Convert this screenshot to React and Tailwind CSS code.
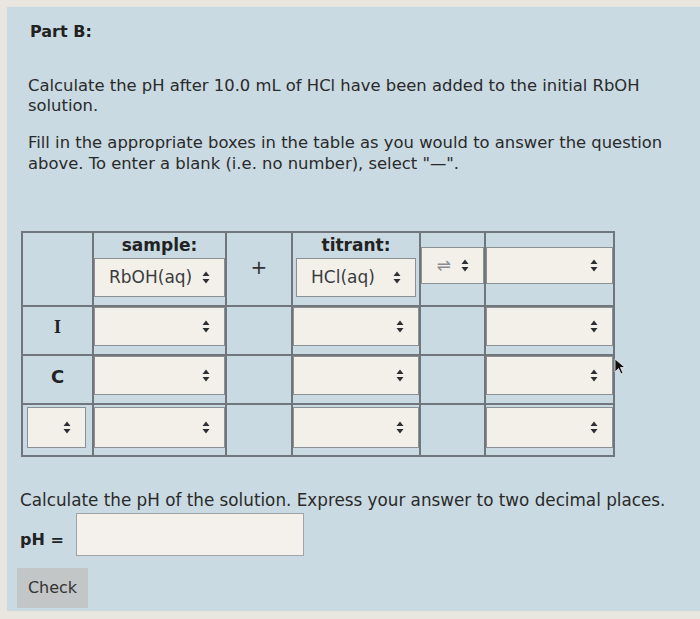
import React from 'react'

const font = { fontFamily: '"DejaVu Sans", Verdana, sans-serif' }

const Arrows = () => (
    <svg width="8" height="13" viewBox="0 0 8 13">
        <path d="M4 0.5L7.5 5H0.5Z M0.5 8H7.5L4 12.5Z" fill="#2d3033" />
    </svg>
)

const Select = ({ children, className = '' }) => (
    <div className={`flex items-center justify-between border border-[#8b9095] bg-[#f3f0ea] pr-[14px] ${className}`}>
        <span className="pl-[14px] text-[17px] text-[#3a3d40]">{children}</span>
        <Arrows />
    </div>
)

const Cell = ({ children, className = '' }) => (
    <div className={`bg-[#c9dae2] ${className}`}>{children}</div>
)

const RowLabel = ({ children, serif }) => (
    <Cell className="flex items-center justify-center pb-[6px]">
        <span
            className="text-[18px] font-bold text-[#222]"
            style={serif ? { fontFamily: '"Liberation Serif", serif' } : undefined}
        >
            {children}
        </span>
    </Cell>
)

const BodyRow = ({ label, serif, last }) => (
    <>
        {last ? (
            <Cell className="pt-[2px] pl-[4px] pr-[6px]">
                <Select className="h-[41px]" />
            </Cell>
        ) : (
            <RowLabel serif={serif}>{label}</RowLabel>
        )}
        <Cell className={last ? 'pt-[2px]' : ''}>
            <Select className={last ? 'h-[41px]' : 'h-[39px]'} />
        </Cell>
        <Cell />
        <Cell className={last ? 'pt-[2px]' : ''}>
            <Select className={last ? 'h-[41px]' : 'h-[39px]'} />
        </Cell>
        <Cell />
        <Cell className={last ? 'pt-[2px]' : ''}>
            <Select className={last ? 'h-[41px]' : 'h-[39px]'} />
        </Cell>
    </>
)

const App = () => {
    return (
        <div className="relative h-[619px] w-[700px] overflow-hidden bg-[#e9e6df] pt-[7px] pl-[7px] pb-[8px]" style={font}>
            <div className="flex h-full flex-col bg-[#c9dae2] text-[#222]">
                <div className="ml-[23px] mt-[15px] text-[16px] font-bold leading-[20px]">Part B:</div>

                <p className="ml-[21px] mt-[34px] w-[650px] text-[16.4px] leading-[20px] text-[#2a2a2a]">
                    Calculate the pH after 10.0 mL of HCl have been added to the initial RbOH solution.
                </p>
                <p className="ml-[21px] mt-[16px] w-[665px] text-[16.4px] leading-[21px] text-[#2a2a2a]">
                    Fill in the appropriate boxes in the table as you would to answer the question above. To enter a blank (i.e. no number), select "&mdash;".
                </p>

                {/* ICE table */}
                <div className="ml-[14px] mt-[57px] grid w-fit grid-cols-[69px_131px_64px_126px_63px_127px] grid-rows-[72px_47px_47px_50px] gap-[2px] bg-[#70767b] p-[2px]">
                    <Cell />
                    <Cell className="flex flex-col">
                        <div className="flex h-[25px] items-center justify-center text-[17px] font-bold text-[#222]">sample:</div>
                        <Select className="h-[39px]">RbOH(aq)</Select>
                    </Cell>
                    <Cell className="flex justify-center pt-[24px]">
                        <span className="text-[20px] leading-[20px] text-[#333]">+</span>
                    </Cell>
                    <Cell className="flex flex-col px-[3px]">
                        <div className="flex h-[25px] items-center justify-center text-[17px] font-bold text-[#222]">titrant:</div>
                        <Select className="h-[39px]">HCl(aq)</Select>
                    </Cell>
                    <Cell className="pt-[14px]">
                        <div className="flex h-[37px] items-center justify-end gap-[10px] border border-[#8b9095] bg-[#f3f0ea] pr-[14px]">
                            <span className="text-[17px] leading-none text-[#8a8d90]">&#8652;</span>
                            <Arrows />
                        </div>
                    </Cell>
                    <Cell className="pt-[14px]">
                        <Select className="h-[37px]" />
                    </Cell>

                    <BodyRow label="I" serif />
                    <BodyRow label="C" />
                    <BodyRow last />
                </div>

                <p className="ml-[13px] mt-[33px] text-[16.8px] leading-[20px] text-[#2a2a2a]">
                    Calculate the pH of the solution. Express your answer to two decimal places.
                </p>
                <div className="ml-[13px] mt-[3px] flex items-center gap-[12px]">
                    <span className="pt-[10px] text-[16px] font-bold text-[#222]">pH =</span>
                    <div className="h-[43px] w-[228px] border border-[#a0a4a7] bg-[#f4f1ec]" />
                </div>
                <div className="ml-[10px] mt-[12px]">
                    <button className="h-[40px] w-[71px] bg-[#c3c6c7] text-[16px] text-[#333]">Check</button>
                </div>
            </div>

            {/* mouse cursor */}
            <svg className="absolute left-[614px] top-[358px]" width="12" height="18" viewBox="0 0 12 18">
                <path d="M1 1L1 14L4.5 10.5L7 16L9 15L6.5 9.5L11 9.5Z" fill="#111" stroke="#eee" strokeWidth="0.8" />
            </svg>
        </div>
    )
}

export default App
